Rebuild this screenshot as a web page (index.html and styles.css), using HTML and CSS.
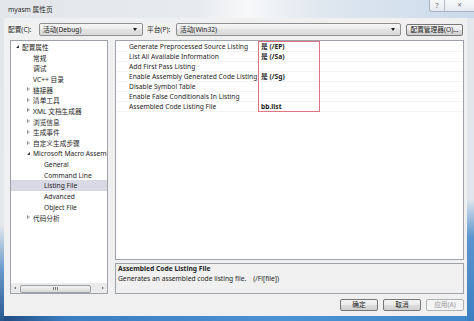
FILE: index.html
```html
<!DOCTYPE html>
<html lang="zh-CN">
<head>
    <meta charset="UTF-8">
    <title>myasm 属性页</title>
    <link rel="stylesheet" href="styles.css">
</head>
<body>
    <div class="window">
        <div class="titlebar">
            <span class="title">myasm 属性页</span>
            <div class="caption-btns">
                <span class="cap-help">?</span>
                <span class="cap-close">✕</span>
            </div>
        </div>

        <div class="client">
            <div class="toolbar">
                <span class="tb-label">配置(C):</span>
                <div class="combo combo-config">活动(Debug)<span class="combo-arrow"></span></div>
                <span class="tb-label tb-label2">平台(P):</span>
                <div class="combo combo-platform">活动(Win32)<span class="combo-arrow"></span></div>
                <button class="btn btn-manager">配置管理器(O)...</button>
            </div>

            <div class="main">
                <div class="tree">
                    <ul class="tree-list">
                        <li class="node lvl0 open"><span class="tw"></span>配置属性</li>
                        <li class="node lvl1"><span class="tw"></span>常规</li>
                        <li class="node lvl1"><span class="tw"></span>调试</li>
                        <li class="node lvl1"><span class="tw"></span>VC++ 目录</li>
                        <li class="node lvl1 closed"><span class="tw"></span>链接器</li>
                        <li class="node lvl1 closed"><span class="tw"></span>清单工具</li>
                        <li class="node lvl1 closed"><span class="tw"></span>XML 文档生成器</li>
                        <li class="node lvl1 closed"><span class="tw"></span>浏览信息</li>
                        <li class="node lvl1 closed"><span class="tw"></span>生成事件</li>
                        <li class="node lvl1 closed"><span class="tw"></span>自定义生成步骤</li>
                        <li class="node lvl1 open"><span class="tw"></span>Microsoft Macro Assembler</li>
                        <li class="node lvl2"><span class="tw"></span>General</li>
                        <li class="node lvl2"><span class="tw"></span>Command Line</li>
                        <li class="node lvl2 selected"><span class="tw"></span>Listing File</li>
                        <li class="node lvl2"><span class="tw"></span>Advanced</li>
                        <li class="node lvl2"><span class="tw"></span>Object File</li>
                        <li class="node lvl1 closed"><span class="tw"></span>代码分析</li>
                    </ul>
                    <div class="hscroll">
                        <span class="sarrow sarrow-left"></span>
                        <div class="strack">
                            <div class="sthumb"><span class="grip"></span></div>
                        </div>
                        <span class="sarrow sarrow-right"></span>
                    </div>
                </div>

                <div class="right">
                    <div class="grid">
                        <div class="row"><span class="name">Generate Preprocessed Source Listing</span><span class="value">是 (/EP)</span></div>
                        <div class="row"><span class="name">List All Available Information</span><span class="value">是 (/Sa)</span></div>
                        <div class="row"><span class="name">Add First Pass Listing</span><span class="value"></span></div>
                        <div class="row"><span class="name">Enable Assembly Generated Code Listing</span><span class="value">是 (/Sg)</span></div>
                        <div class="row"><span class="name">Disable Symbol Table</span><span class="value"></span></div>
                        <div class="row"><span class="name">Enable False Conditionals In Listing</span><span class="value"></span></div>
                        <div class="row"><span class="name">Assembled Code Listing File</span><span class="value">bb.list</span></div>
                        <div class="mark"></div>
                    </div>
                    <div class="desc">
                        <div class="desc-title">Assembled Code Listing File</div>
                        <div class="desc-text">Generates an assembled code listing file.<span class="desc-switch">(/Fl[file])</span></div>
                    </div>
                </div>
            </div>

            <div class="footer">
                <button class="btn btn-ok">确定</button>
                <button class="btn btn-cancel">取消</button>
                <button class="btn btn-apply" disabled>应用(A)</button>
            </div>
        </div>
    </div>
</body>
</html>
```

FILE: styles.css
```css
* {
    box-sizing: border-box;
}

html, body {
    margin: 0;
    padding: 0;
}

body {
    width: 474px;
    height: 321px;
    overflow: hidden;
    font-family: "Noto Sans", "Noto Sans CJK SC", sans-serif;
    font-size: 6.7px;
    color: #1e1e1e;
}

.window {
    height: 321px;
    display: flex;
    flex-direction: column;
    background:
        linear-gradient(to right, #e2e6ea, #e8ebee 42%, #f7f8f9 52%, #dfe7ef 68%, #cadaeb 100%) top / 100% 18px no-repeat,
        linear-gradient(#e2e6eb, #e4e8ec 70%, #6a9bcc 84%, #28578f) left top / 4px 100% no-repeat,
        linear-gradient(#e4e8ec, #e0e6ec 62%, #5a95cf 74%, #3b7fc3) right top / 7px 100% no-repeat,
        linear-gradient(to right, #1f4a7e, #3a7dc1 14%, #4b92d3 60%, #3e86c9) left bottom / 100% 5px no-repeat;
}

/* Titelleiste */
.titlebar {
    height: 18px;
    display: flex;
    align-items: flex-start;
}

.title {
    padding: 6px 0 0 8px;
    line-height: 8px;
    color: #2a2a2a;
}

.caption-btns {
    margin-left: auto;
    display: flex;
    height: 12px;
    border: 1px solid #a9b2bf;
    border-top: none;
    border-right: none;
    border-radius: 0 0 0 3px;
    background: linear-gradient(#f7f8fa, #e7ebf0);
    color: #6a6f78;
    line-height: 11px;
}

.cap-help {
    width: 15px;
    text-align: center;
    border-right: 1px solid #b5bcc7;
    font-size: 7px;
}

.cap-close {
    width: 29px;
    text-align: center;
    font-size: 6px;
}

/* Client-Bereich */
.client {
    flex: 1;
    margin: 0 7px 5px 4px;
    background: #f0f0f0;
    display: flex;
    flex-direction: column;
}

.toolbar {
    display: flex;
    align-items: center;
    height: 18px;
    padding: 5px 0 0 4px;
}

.tb-label {
    width: 31px;
    line-height: 13px;
}

.tb-label2 {
    margin-left: 4px;
    width: 29px;
}

.combo {
    position: relative;
    height: 13px;
    line-height: 11px;
    padding-left: 3px;
    border: 1px solid #8e8f8f;
    border-radius: 2px;
    background: linear-gradient(#f6f6f6, #ececec 50%, #e2e2e2 50%, #dadada);
}

.combo-config {
    width: 104px;
}

.combo-platform {
    width: 225px;
}

.combo-arrow {
    position: absolute;
    right: 5px;
    top: 4px;
    border-left: 2px solid transparent;
    border-right: 2px solid transparent;
    border-top: 3px solid #1e1e1e;
}

.btn {
    font-family: inherit;
    font-size: 6.7px;
    color: #1e1e1e;
    height: 12px;
    padding: 0;
    border: 1px solid #777;
    border-radius: 2px;
    background: linear-gradient(#f3f3f3, #ebebeb 50%, #dddddd 50%, #cfcfcf);
    line-height: 10px;
}

.btn-manager {
    margin-left: 5px;
    width: 57px;
    height: 12px;
}

/* Hauptbereich */
.main {
    display: flex;
    height: 254px;
    margin-top: 4px;
    padding-left: 6px;
    gap: 7px;
}

.tree {
    width: 98px;
    display: flex;
    flex-direction: column;
    border: 1px solid #9ea3ab;
    background: #fff;
    overflow: hidden;
}

.tree-list {
    flex: 1;
    list-style: none;
    margin: 0;
    padding: 0.5px 0 0;
}

.node {
    display: flex;
    align-items: center;
    height: 10.69px;
    white-space: nowrap;
    padding-left: 4px;
}

.node.lvl1 {
    padding-left: 15px;
}

.node.lvl2 {
    padding-left: 26px;
}

.node.selected {
    background: #d9d9e6;
}

.tw {
    flex: none;
    width: 7px;
    height: 4px;
    position: relative;
}

.open > .tw::before {
    content: "";
    position: absolute;
    left: 1px;
    top: 0;
    border-left: 3px solid transparent;
    border-bottom: 3px solid #333;
}

.closed > .tw::before {
    content: "";
    position: absolute;
    left: 1px;
    top: -0.5px;
    width: 0;
    height: 0;
    border-top: 2.5px solid transparent;
    border-bottom: 2.5px solid transparent;
    border-left: 3px solid #8a8a8a;
}

.closed > .tw::after {
    content: "";
    position: absolute;
    left: 1.6px;
    top: 0.6px;
    border-top: 1.4px solid transparent;
    border-bottom: 1.4px solid transparent;
    border-left: 1.6px solid #fff;
}

.hscroll {
    display: flex;
    align-items: center;
    height: 10px;
    background: #eaeaea;
    border-top: 1px solid #ececec;
}

.sarrow {
    flex: none;
    width: 8px;
    height: 9px;
    position: relative;
}

.sarrow::before {
    content: "";
    position: absolute;
    top: 3px;
    border-top: 1.5px solid transparent;
    border-bottom: 1.5px solid transparent;
}

.sarrow-left::before {
    left: 3px;
    border-right: 2px solid #555;
}

.sarrow-right::before {
    left: 3px;
    border-left: 2px solid #555;
}

.strack {
    flex: 1;
    height: 9px;
    padding: 0.5px 8px 0 1px;
}

.sthumb {
    height: 8px;
    border: 1px solid #9aa0a8;
    border-radius: 2px;
    background: linear-gradient(to bottom, #f4f4f4, #e6e6e6 50%, #d9d9d9);
    display: flex;
    justify-content: center;
    align-items: center;
}

.grip {
    width: 5px;
    height: 3px;
    background: repeating-linear-gradient(to right, #777 0 1px, transparent 1px 2px);
}

.right {
    width: 349px;
    display: flex;
    flex-direction: column;
    gap: 3px;
}

.grid {
    position: relative;
    height: 220px;
    border: 1px solid #9ea3ab;
    background: #fff;
    padding-top: 0.6px;
}

.row {
    display: flex;
    height: 10.1px;
    line-height: 10.1px;
    border-bottom: 1px solid #f3f3f3;
    white-space: nowrap;
}

.name {
    width: 142px;
    padding-left: 13px;
    overflow: hidden;
}

.value {
    flex: 1;
    padding-left: 2px;
    font-weight: bold;
    border-left: 1px solid #f3f3f3;
}

.mark {
    position: absolute;
    left: 142px;
    top: 0;
    width: 62px;
    height: 71px;
    border: 1px solid #e07482;
}

.desc {
    flex: 1;
    border: 1px solid #9ea3ab;
    background: #f0f0f0;
    padding: 0 0 0 2px;
    line-height: 10px;
}

.desc-title {
    font-weight: bold;
}

.desc-switch {
    margin-left: 7px;
}

/* Schaltflächen */
.footer {
    display: flex;
    justify-content: flex-end;
    gap: 5px;
    margin-top: 5px;
    padding-right: 3px;
}

.btn-ok, .btn-cancel, .btn-apply {
    width: 38px;
}

.btn-apply {
    color: #9a9a9a;
    border-color: #adb2b5;
    background: #f4f4f4;
}
```
